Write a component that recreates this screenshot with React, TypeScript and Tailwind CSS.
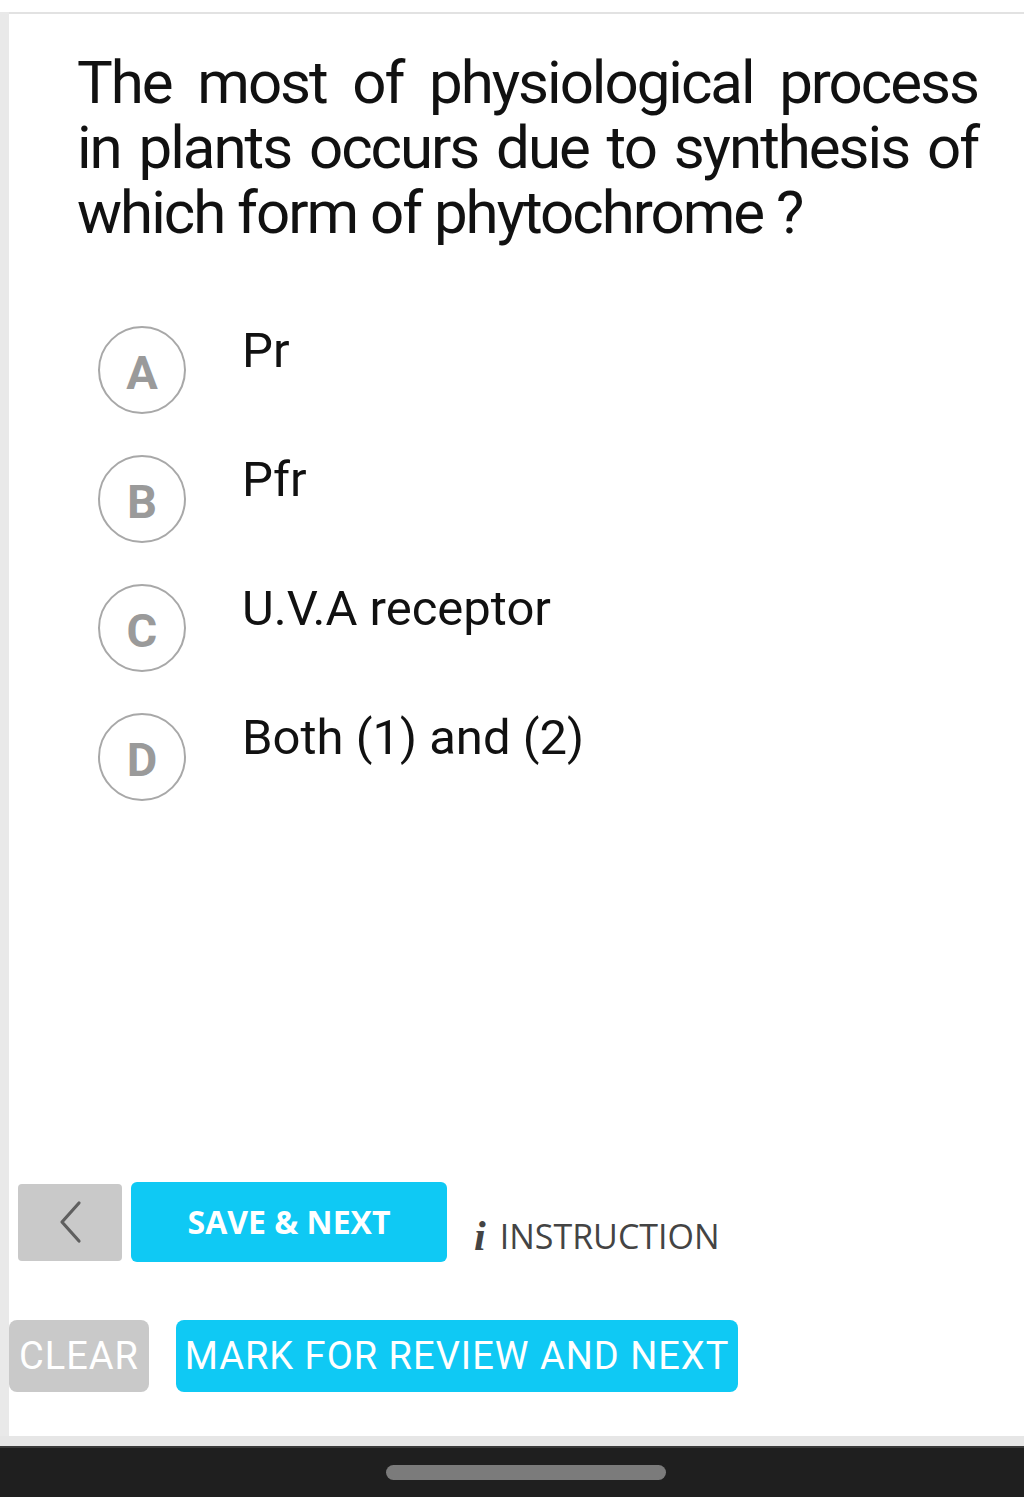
const options = [
  { key: 'A', text: 'Pr' },
  { key: 'B', text: 'Pfr' },
  { key: 'C', text: 'U.V.A receptor' },
  { key: 'D', text: 'Both (1) and (2)' },
]

export default function App() {
  return (
    <div className="flex h-[1497px] w-[1024px] flex-col bg-white font-['Roboto',sans-serif]">
      <div className="h-[12px] bg-white" />

      <div className="flex flex-1">
        {/* left edge strip */}
        <div className="w-[9px] bg-[#e9e9e9]" />

        <div className="flex flex-1 flex-col border-t-2 border-[#e2e2e2] bg-white">
          {/* Question */}
          <div className="pl-[68px] pr-[46px] pt-[36px] text-[60px] leading-[65px] tracking-[-2px] text-[#111]">
            <div className="text-justify [text-align-last:justify]">The most of physiological process</div>
            <div className="text-justify [text-align-last:justify]">in plants occurs due to synthesis of</div>
            <div>which form of phytochrome ?</div>
          </div>

          {/* Options */}
          <div className="mt-[60px] flex flex-col">
            {options.map((o) => (
              <div key={o.key} className="flex h-[129px] items-center pl-[89px]">
                <div className="flex h-[88px] w-[88px] shrink-0 items-center justify-center rounded-full border-2 border-[#a8a8a8]">
                  <span className="mt-[6px] text-[47px] font-bold leading-none text-[#9a9a9a]">{o.key}</span>
                </div>
                <span className="mb-[38px] ml-[56px] text-[49px] leading-none text-[#111]">{o.text}</span>
              </div>
            ))}
          </div>

          <div className="flex-1" />

          {/* Action buttons */}
          <div className="flex items-center pl-[9px]">
            <button className="flex h-[77px] w-[104px] items-center justify-center rounded-[4px] bg-[#c9c9c9]">
              <svg width="28" height="46" viewBox="0 0 28 46" fill="none">
                <polyline points="23,4 6,23 23,42" stroke="#5f5f5f" strokeWidth="3.2" strokeLinecap="round" strokeLinejoin="round" />
              </svg>
            </button>
            <button className="ml-[9px] flex h-[80px] w-[316px] items-center justify-center rounded-[6px] bg-[#0fc9f4] font-['Open_Sans',sans-serif] text-[32px] font-bold text-white">
              SAVE &amp; NEXT
            </button>
            <div className="ml-[27px] mt-[28px] flex items-center text-[#444]">
              <span className="font-['Liberation_Serif',serif] text-[42px] font-bold italic leading-none">i</span>
              <span className="ml-[14px] font-['Open_Sans',sans-serif] text-[34px] leading-none">INSTRUCTION</span>
            </div>
          </div>

          <div className="mb-[44px] mt-[58px] flex items-center">
            <button className="flex h-[72px] w-[140px] items-center justify-center rounded-[8px] bg-[#c9c9c9] text-[38px] tracking-[1px] text-white">
              CLEAR
            </button>
            <button className="ml-[27px] flex h-[72px] w-[562px] items-center justify-center rounded-[8px] bg-[#0fc9f4] text-[38px] tracking-[1px] text-white">
              MARK FOR REVIEW AND NEXT
            </button>
          </div>
        </div>
      </div>

      {/* bottom system bar */}
      <div className="h-[10px] bg-[#e6e6e6]" />
      <div className="flex h-[51px] items-center justify-center border-t-2 border-[#3a3a3a] bg-[#1f1f1f]">
        <div className="ml-[28px] h-[15px] w-[280px] rounded-full bg-[#7b7b7b]" />
      </div>
    </div>
  )
}
